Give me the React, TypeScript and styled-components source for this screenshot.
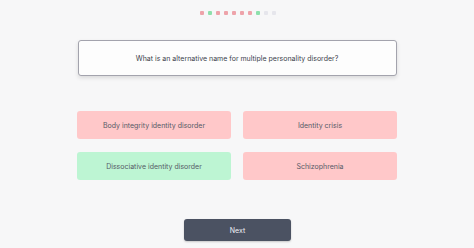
import React from 'react';
import styled, { createGlobalStyle } from 'styled-components';

const GlobalStyle = createGlobalStyle`
  html, body {
    margin: 0;
    padding: 0;
    background: #f7f7f8;
  }
  body {
    font-family: Inter, 'Liberation Sans', sans-serif;
  }
`;

const Page = styled.div`
  width: 474px;
  height: 248px;
  display: flex;
  flex-flow: column nowrap;
  align-items: center;
  padding-top: 11px;
  box-sizing: border-box;
`;

const Progress = styled.div`
  display: flex;
  gap: 4px;
  height: 4px;
  margin-left: 1px;
`;

type DotState = 'wrong' | 'right' | 'todo';

const dotColors: Record<DotState, string> = {
  wrong: '#eea3aa',
  right: '#8ee0ac',
  todo: '#e6e6ec',
};

const Dot = styled.span<{ $state: DotState }>`
  width: 4px;
  height: 4px;
  border-radius: 1px;
  background: ${(p) => dotColors[p.$state]};
`;

const Question = styled.div`
  margin-top: 25px;
  width: 319px;
  height: 36px;
  box-sizing: border-box;
  border: 1.5px solid #a3a3ad;
  border-radius: 3px;
  background: #fdfdfd;
  box-shadow: 0 2px 4px rgba(0, 0, 0, 0.12);
  display: flex;
  align-items: center;
  justify-content: center;
  font-size: 7px;
  color: #3a3e4a;
`;

const Answers = styled.div`
  margin-top: 35px;
  display: grid;
  grid-template-columns: 154px 154px;
  column-gap: 12px;
  row-gap: 13px;
`;

const Answer = styled.button<{ $correct?: boolean }>`
  height: 28px;
  border: none;
  border-radius: 3px;
  background: ${(p) => (p.$correct ? '#bdf5d3' : '#ffc8c9')};
  font-family: inherit;
  font-size: 7px;
  color: #555a66;
  padding: 0;
`;

const NextButton = styled.button`
  margin-top: 39px;
  margin-left: 1px;
  width: 107px;
  height: 22px;
  border: none;
  border-radius: 3px;
  background: #4b5262;
  color: #eef0f4;
  font-family: inherit;
  font-size: 7px;
  box-shadow: 0 1px 2px rgba(0, 0, 0, 0.2);
`;

const progress: DotState[] = [
  'wrong',
  'right',
  'wrong',
  'wrong',
  'wrong',
  'wrong',
  'wrong',
  'right',
  'todo',
  'todo',
];

const answers = [
  { text: 'Body integrity identity disorder', correct: false },
  { text: 'Identity crisis', correct: false },
  { text: 'Dissociative identity disorder', correct: true },
  { text: 'Schizophrenia', correct: false },
];

export default function App(): JSX.Element {
  return (
    <>
      <GlobalStyle />
      <Page>
        <Progress>
          {progress.map((s, i) => (
            <Dot key={i} $state={s} />
          ))}
        </Progress>
        <Question>What is an alternative name for multiple personality disorder?</Question>
        <Answers>
          {answers.map((a) => (
            <Answer key={a.text} $correct={a.correct}>
              {a.text}
            </Answer>
          ))}
        </Answers>
        <NextButton>Next</NextButton>
      </Page>
    </>
  );
}
